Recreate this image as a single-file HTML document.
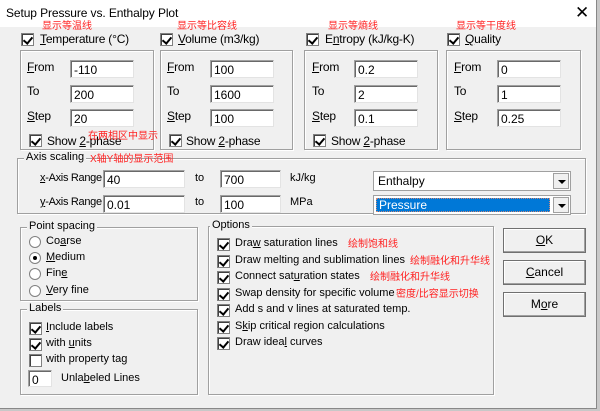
<!DOCTYPE html><html><head><meta charset="utf-8"><style>
*{box-sizing:border-box;margin:0;padding:0}
body{width:600px;height:411px;background:#c8c8c8;font-family:"Liberation Sans",Arial,sans-serif;font-size:11px;color:#000;position:relative;overflow:hidden}
.win{position:absolute;left:0;top:0;width:597px;height:409px;background:#f0f0f0;border-right:1px solid #888;border-bottom:1px solid #888}
.title{position:absolute;left:0;top:0;width:596px;height:27px;background:#fff}
.a{position:absolute;white-space:nowrap}
.t{font-size:12px;letter-spacing:-0.2px}
.cn{position:absolute;white-space:nowrap;color:#f22;font-size:10px;font-family:"Liberation Sans","Noto Sans CJK SC",sans-serif}
.g{position:absolute;border:1px solid #a0a0a0;box-shadow:inset 1px 1px 0 #fff,1px 1px 0 #fff}
.gl{position:absolute;background:#f0f0f0;padding:0 2px;white-space:nowrap;top:-8px;left:6px}
.in{position:absolute;background:#fff;border:1px solid #a0a0a0;border-right-color:#e3e3e3;border-bottom-color:#e3e3e3;box-shadow:inset 1px 1px 0 #696969;padding:2px 0 0 3px;height:18px;font-size:12px}
.cb{position:absolute;width:13px;height:13px;background:#fff;border:1px solid #808080;box-shadow:inset 1px 1px 0 #404040}
.cb.k::after{content:"";position:absolute;left:3px;top:1px;width:4px;height:7px;border:solid #000;border-width:0 2px 2px 0;transform:rotate(40deg)}
.rd{position:absolute;width:12px;height:12px;border-radius:50%;background:#fff;border:1px solid #808080}
.rd.k::after{content:"";position:absolute;left:3px;top:3px;width:4px;height:4px;border-radius:50%;background:#000}
.btn{position:absolute;left:503px;width:83px;height:25px;border:1px solid #707070;box-shadow:inset -1px -1px 0 #a0a0a0,inset 1px 1px 0 #fff;text-align:center;line-height:23px;font-size:12px}
u{text-decoration:underline}
.combo{position:absolute;left:373px;width:198px;height:20px;border:1px solid #a0a0a0;background:#fff;padding:2px 0 0 4px;font-size:12px}
.dd{position:absolute;right:1px;top:1px;width:16px;height:16px;background:#f0f0f0;border:1px solid #a0a0a0}
.dd::after{content:"";position:absolute;left:4px;top:6px;border:4px solid transparent;border-top:4px solid #000;border-bottom:0}
</style></head><body><div class="win">
<div class="title"></div>
<div class="a" style="left:6px;top:6px;font-size:12px;letter-spacing:-0.1px">Setup Pressure vs. Enthalpy Plot</div>
<div class="a" style="left:575px;top:3px;font-size:17px">✕</div>

<div class="cn" style="left:42px;top:17px">显示等温线</div>
<div class="cn" style="left:177px;top:17px">显示等比容线</div>
<div class="cn" style="left:328px;top:17px">显示等熵线</div>
<div class="cn" style="left:456px;top:17px">显示等干度线</div>

<div class="cb k" style="left:21px;top:33px"></div><div class="a t" style="left:40px;top:32px"><u>T</u>emperature (°C)</div>
<div class="cb k" style="left:160px;top:33px"></div><div class="a t" style="left:178px;top:32px"><u>V</u>olume (m3/kg)</div>
<div class="cb k" style="left:306px;top:33px"></div><div class="a t" style="left:325px;top:32px">E<u>n</u>tropy (kJ/kg-K)</div>
<div class="cb k" style="left:447px;top:33px"></div><div class="a t" style="left:465px;top:32px"><u>Q</u>uality</div>

<div class="g" style="left:20px;top:50px;width:134px;height:100px"></div>
<div class="g" style="left:160px;top:50px;width:133px;height:100px"></div>
<div class="g" style="left:304px;top:50px;width:134px;height:100px"></div>
<div class="g" style="left:446px;top:50px;width:135px;height:100px"></div>

<div class="a t" style="left:27px;top:60px"><u>F</u>rom</div><div class="in" style="left:70px;top:60px;width:64px">-110</div>
<div class="a t" style="left:27px;top:84px">To</div><div class="in" style="left:70px;top:85px;width:64px">200</div>
<div class="a t" style="left:27px;top:109px"><u>S</u>tep</div><div class="in" style="left:70px;top:109px;width:64px">20</div>
<div class="cb k" style="left:29px;top:134px"></div><div class="a t" style="left:47px;top:134px">Show <u>2</u>-phase</div>
<div class="cn" style="left:88px;top:127px">在两相区中显示</div>

<div class="a t" style="left:167px;top:60px"><u>F</u>rom</div><div class="in" style="left:210px;top:60px;width:64px">100</div>
<div class="a t" style="left:167px;top:84px">To</div><div class="in" style="left:210px;top:85px;width:64px">1600</div>
<div class="a t" style="left:167px;top:109px"><u>S</u>tep</div><div class="in" style="left:210px;top:109px;width:64px">100</div>
<div class="cb k" style="left:169px;top:134px"></div><div class="a t" style="left:186px;top:134px">Show <u>2</u>-phase</div>

<div class="a t" style="left:312px;top:60px"><u>F</u>rom</div><div class="in" style="left:354px;top:60px;width:64px">0.2</div>
<div class="a t" style="left:312px;top:84px">To</div><div class="in" style="left:354px;top:85px;width:64px">2</div>
<div class="a t" style="left:312px;top:109px"><u>S</u>tep</div><div class="in" style="left:354px;top:109px;width:64px">0.1</div>
<div class="cb k" style="left:313px;top:134px"></div><div class="a t" style="left:331px;top:134px">Show <u>2</u>-phase</div>

<div class="a t" style="left:454px;top:60px"><u>F</u>rom</div><div class="in" style="left:497px;top:60px;width:64px">0</div>
<div class="a t" style="left:454px;top:84px">To</div><div class="in" style="left:497px;top:85px;width:64px">1</div>
<div class="a t" style="left:454px;top:109px"><u>S</u>tep</div><div class="in" style="left:497px;top:109px;width:64px">0.25</div>

<div class="g" style="left:17px;top:158px;width:569px;height:56px"><div class="gl" style="left:6px">Axis scaling</div></div>
<div class="cn" style="left:90px;top:150px">X轴Y轴的显示范围</div>
<div class="a" style="left:40px;top:172px;letter-spacing:-0.3px"><u>x</u>-Axis Range</div><div class="in" style="left:103px;top:170px;width:82px">40</div>
<div class="a" style="left:195px;top:172px">to</div><div class="in" style="left:220px;top:170px;width:61px">700</div>
<div class="a" style="left:290px;top:172px">kJ/kg</div>
<div class="a" style="left:40px;top:196px;letter-spacing:-0.3px"><u>y</u>-Axis Range</div><div class="in" style="left:103px;top:195px;width:82px">0.01</div>
<div class="a" style="left:195px;top:196px">to</div><div class="in" style="left:220px;top:195px;width:61px">100</div>
<div class="a" style="left:290px;top:196px">MPa</div>
<div class="combo" style="top:171px">Enthalpy<div class="dd"></div></div>
<div class="combo" style="top:195px;padding:0;"><div style="position:absolute;left:2px;top:2px;width:174px;height:14px;background:#0078d7;border:1px dotted #c87;color:#fff;padding-left:2px;line-height:13px">Pressure</div><div class="dd"></div></div>

<div class="g" style="left:20px;top:227px;width:178px;height:74px"><div class="gl">Point spacing</div></div>
<div class="rd" style="left:29px;top:236px"></div><div class="a" style="left:46px;top:235px">Co<u>a</u>rse</div>
<div class="rd k" style="left:29px;top:252px"></div><div class="a" style="left:46px;top:251px"><u>M</u>edium</div>
<div class="rd" style="left:29px;top:268px"></div><div class="a" style="left:46px;top:267px">Fin<u>e</u></div>
<div class="rd" style="left:29px;top:285px"></div><div class="a" style="left:46px;top:284px"><u>V</u>ery fine</div>

<div class="g" style="left:20px;top:309px;width:178px;height:86px"><div class="gl">Labels</div></div>
<div class="cb k" style="left:29px;top:322px"></div><div class="a" style="left:46px;top:321px"><u>I</u>nclude labels</div>
<div class="cb k" style="left:29px;top:338px"></div><div class="a" style="left:46px;top:337px">with <u>u</u>nits</div>
<div class="cb" style="left:29px;top:354px"></div><div class="a" style="left:46px;top:353px">with property tag</div>
<div class="in" style="left:28px;top:370px;width:24px;height:17px">0</div><div class="a" style="left:61px;top:372px">Unla<u>b</u>eled Lines</div>

<div class="g" style="left:208px;top:226px;width:286px;height:169px"><div class="gl" style="left:1px">Options</div></div>
<div class="cb k" style="left:217px;top:238px"></div><div class="a" style="left:235px;top:237px">Dra<u>w</u> saturation lines</div><div class="cn" style="left:348px;top:235px">绘制饱和线</div>
<div class="cb k" style="left:217px;top:255px"></div><div class="a" style="left:235px;top:254px">Draw melting and sublimation lines</div><div class="cn" style="left:410px;top:252px">绘制融化和升华线</div>
<div class="cb k" style="left:217px;top:271px"></div><div class="a" style="left:235px;top:270px">Connect sat<u>u</u>ration states</div><div class="cn" style="left:370px;top:268px">绘制融化和升华线</div>
<div class="cb k" style="left:217px;top:288px"></div><div class="a" style="left:235px;top:287px">Swap density for specific volume</div><div class="cn" style="left:396px;top:285px">密度/比容显示切换</div>
<div class="cb k" style="left:217px;top:304px"></div><div class="a" style="left:235px;top:303px">Add s and v lines at saturated temp.</div>
<div class="cb k" style="left:217px;top:321px"></div><div class="a" style="left:235px;top:320px">S<u>k</u>ip critical region calculations</div>
<div class="cb k" style="left:217px;top:337px"></div><div class="a" style="left:235px;top:336px">Draw idea<u>l</u> curves</div>

<div class="btn" style="top:228px"><u>O</u>K</div>
<div class="btn" style="top:260px"><u>C</u>ancel</div>
<div class="btn" style="top:292px">M<u>o</u>re</div>
</div></body></html>
